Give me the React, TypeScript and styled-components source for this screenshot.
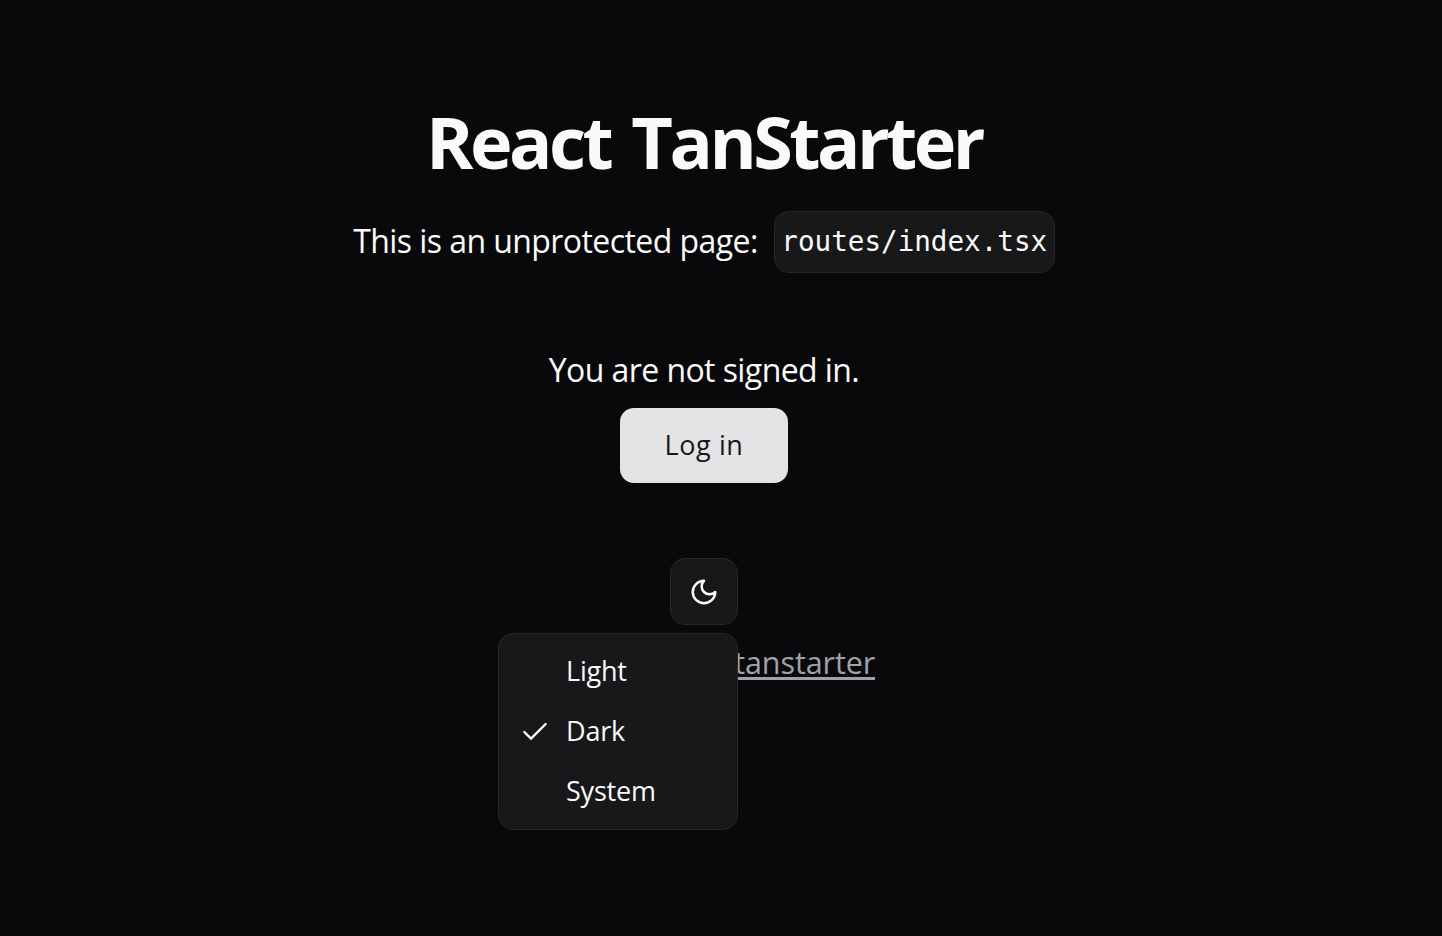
import styled, { createGlobalStyle } from 'styled-components';

const GlobalStyle = createGlobalStyle`
  html, body {
    margin: 0;
    padding: 0;
    height: 100%;
    overflow: hidden;
    background-color: #09090b;
  }
`;

const Page = styled.div`
  display: flex;
  flex-direction: column;
  align-items: center;
  width: 1408px;
  height: 936px;
  padding-top: 105px;
  box-sizing: border-box;
  position: relative;
  font-family: 'Open Sans', 'Noto Sans', sans-serif;
  color: #fafafa;
`;

const Title = styled.h1`
  margin: 0;
  font-size: 72px;
  line-height: 72px;
  font-weight: 700;
  letter-spacing: -3.55px;
  word-spacing: 6px;
  color: #fafafa;
`;

const InfoRow = styled.div`
  display: flex;
  align-items: center;
  gap: 16px;
  margin-top: 34px;
  font-size: 32px;
  letter-spacing: -0.57px;
`;

const InfoText = styled.span`
  padding-bottom: 4px;
`;

const Code = styled.code`
  display: flex;
  align-items: center;
  justify-content: center;
  width: 281px;
  height: 62px;
  padding-bottom: 2px;
  box-sizing: border-box;
  background-color: #18181b;
  border: 1px solid #27272a;
  border-radius: 15px;
  font-family: 'DejaVu Sans Mono', monospace;
  font-size: 27.6px;
  letter-spacing: 0;
`;

const AuthBlock = styled.div`
  display: flex;
  flex-direction: column;
  align-items: center;
  margin-top: 75px;
`;

const Status = styled.p`
  margin: 0;
  font-size: 32px;
  line-height: 44px;
  letter-spacing: -0.58px;
`;

const LoginButton = styled.button`
  width: 168px;
  height: 75px;
  margin-top: 16px;
  padding: 0 0 2px;
  border: none;
  border-radius: 14px;
  background-color: #e4e4e7;
  color: #18181b;
  font-family: inherit;
  font-size: 27px;
  letter-spacing: 0.6px;
`;

const ThemeButton = styled.button`
  display: flex;
  align-items: center;
  justify-content: center;
  width: 68px;
  height: 67px;
  margin-top: 75px;
  padding: 0;
  background-color: #18181b;
  border: 1px solid #27272a;
  border-radius: 15px;
  color: #fafafa;
`;

const RepoLink = styled.a`
  margin: 16px 0 0 4px;
  font-size: 30.5px;
  line-height: 42px;
  letter-spacing: -0.1px;
  color: #a1a1aa;
  text-decoration: underline;
  text-underline-offset: 3px;
`;

const Menu = styled.div`
  position: absolute;
  left: 498px;
  top: 633px;
  width: 240px;
  height: 197px;
  box-sizing: border-box;
  padding: 8px;
  background-color: #18181b;
  border: 1px solid #27272a;
  border-radius: 15px;
`;

const MenuItem = styled.div`
  display: flex;
  align-items: center;
  position: relative;
  box-sizing: border-box;
  height: 60px;
  padding: 0 0 4px 59px;
  font-size: 27px;
  letter-spacing: -0.2px;
  color: #fafafa;
`;

const CheckMark = styled.span`
  position: absolute;
  left: 12px;
  top: 14px;
  display: flex;
`;

const MoonIcon = () => (
  <svg width="30" height="30" viewBox="0 0 24 24" fill="none" stroke="currentColor" strokeWidth="2" strokeLinecap="round" strokeLinejoin="round">
    <path d="M12 3a6 6 0 0 0 9 9 9 9 0 1 1-9-9Z" />
  </svg>
);

const CheckIcon = () => (
  <svg width="32" height="32" viewBox="0 0 24 24" fill="none" stroke="currentColor" strokeWidth="1.8" strokeLinecap="round" strokeLinejoin="round">
    <path d="M20 6 9 17l-5-5" />
  </svg>
);

const App = () => {
  return (
    <>
      <GlobalStyle />
      <Page>
        <Title>React TanStarter</Title>
        <InfoRow>
          <InfoText>This is an unprotected page:</InfoText>
          <Code>routes/index.tsx</Code>
        </InfoRow>
        <AuthBlock>
          <Status>You are not signed in.</Status>
          <LoginButton>Log in</LoginButton>
        </AuthBlock>
        <ThemeButton aria-label="Toggle theme">
          <MoonIcon />
        </ThemeButton>
        <RepoLink href="#">dotnize/react-tanstarter</RepoLink>
        <Menu>
          <MenuItem>Light</MenuItem>
          <MenuItem>
            <CheckMark>
              <CheckIcon />
            </CheckMark>
            Dark
          </MenuItem>
          <MenuItem>System</MenuItem>
        </Menu>
      </Page>
    </>
  );
};

export default App;
